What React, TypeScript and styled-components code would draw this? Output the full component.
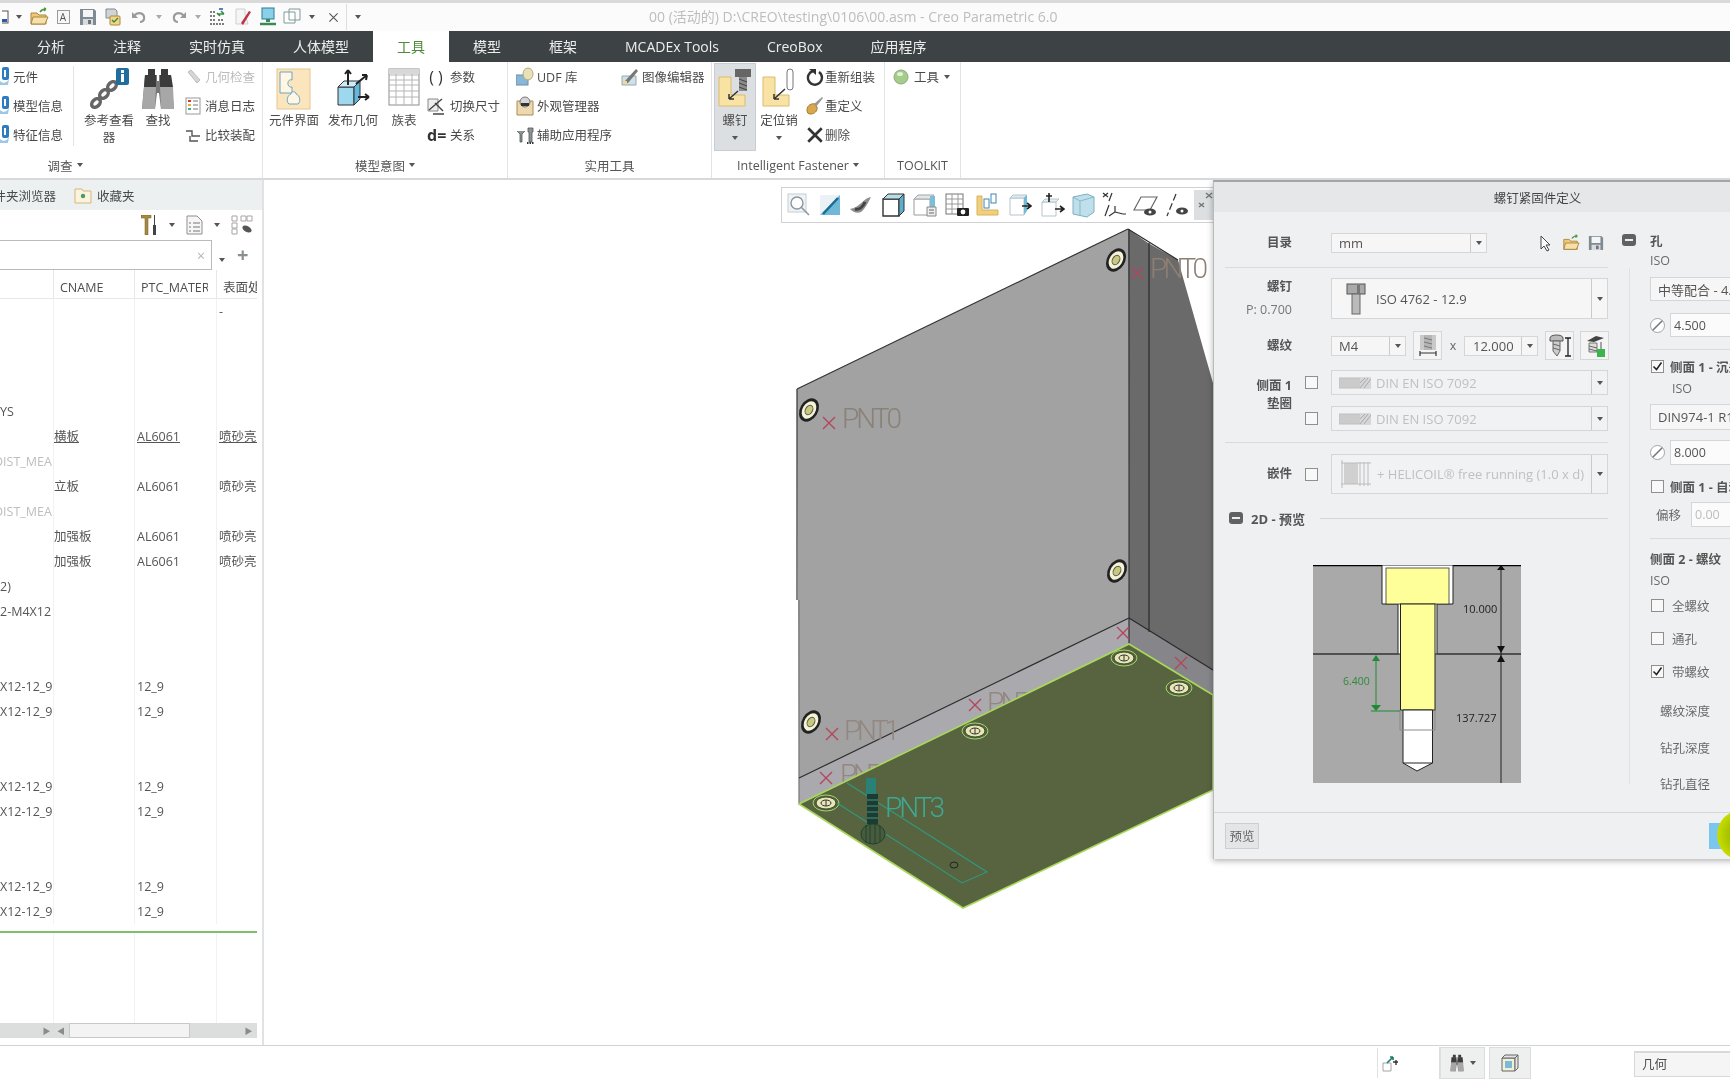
import React from "react";
import styled, { createGlobalStyle } from "styled-components";

const GlobalStyle = createGlobalStyle`
  html, body {
    margin: 0;
    padding: 0;
    background: #fff;
    overflow: hidden;
  }
  * { box-sizing: border-box; }
`;

const FONT = `"Open Sans", "Noto Sans CJK SC", sans-serif`;

const Page = styled.div`
  width: 1730px;
  height: 1080px;
  display: flex;
  flex-direction: column;
  overflow: hidden;
  background: #fff;
  color: #4a4a4a;
  font-family: ${FONT};
  font-size: 12.5px;
  filter: blur(0.35px);
`;

const Caret = styled.span<{ $c?: string }>`
  display: inline-block;
  flex: none;
  width: 0;
  height: 0;
  border-left: 3.5px solid transparent;
  border-right: 3.5px solid transparent;
  border-top: 4px solid ${(p) => p.$c || "#555"};
`;

const Svg = styled.svg`
  display: block;
  flex: none;
`;

/* ---------- title bar ---------- */
const TitleBar = styled.header`
  height: 31px;
  flex: none;
  display: flex;
  align-items: center;
  border-top: 3px solid #d9d9d9;
  background: #fbfbfb;
`;
const QaGroup = styled.div`
  display: flex;
  align-items: center;
  width: 368px;
  flex: none;
`;
const QaSlot = styled.div<{ $w: number; $line?: boolean }>`
  width: ${(p) => p.$w}px;
  height: 26px;
  display: flex;
  align-items: center;
  justify-content: center;
  flex: none;
  border-left: ${(p) => (p.$line ? "1px solid #dedede" : "none")};
`;
const LetterBox = styled.span`
  width: 13px;
  height: 14px;
  border: 1px solid #9a9a9a;
  background: #f7f7f7;
  font-size: 10px;
  line-height: 12px;
  text-align: center;
  color: #555;
`;
const WindowTitle = styled.div`
  margin-left: 281px;
  margin-top: -2px;
  font-size: 14px;
  color: #bdbdbd;
  white-space: nowrap;
`;

/* ---------- tabs ---------- */
const TabBar = styled.nav`
  height: 31px;
  flex: none;
  display: flex;
  padding-left: 13px;
  background: #3d4345;
`;
const Tab = styled.div<{ $active?: boolean }>`
  padding: 0 24px;
  font-size: 14px;
  line-height: 32px;
  white-space: nowrap;
  color: ${(p) => (p.$active ? "#4f8a3a" : "#eceeee")};
  background: ${(p) => (p.$active ? "#fff" : "transparent")};
`;

/* ---------- ribbon ---------- */
const Ribbon = styled.section`
  height: 118px;
  flex: none;
  display: flex;
  border-bottom: 2px solid #d6d8d9;
  background: #fff;
`;
const RibbonGroup = styled.div<{ $w: number }>`
  width: ${(p) => p.$w}px;
  flex: none;
  display: flex;
  flex-direction: column;
  border-right: 1px solid #e2e3e4;
`;
const GroupBody = styled.div`
  height: 90px;
  display: flex;
`;
const GroupLabel = styled.div<{ $w?: number }>`
  width: ${(p) => (p.$w ? `${p.$w}px` : "100%")};
  height: 26px;
  display: flex;
  align-items: center;
  justify-content: center;
  gap: 4px;
  font-size: 12.5px;
  white-space: nowrap;
  color: #555;
`;
const Stack = styled.div<{ $w: number; $pad?: number }>`
  width: ${(p) => p.$w}px;
  padding-left: ${(p) => p.$pad || 0}px;
  flex: none;
  display: flex;
  flex-direction: column;
`;
const SmallBtn = styled.div<{ $off?: boolean; $gap?: number }>`
  height: 29px;
  display: flex;
  align-items: center;
  gap: ${(p) => p.$gap ?? 3}px;
  white-space: nowrap;
  color: ${(p) => (p.$off ? "#bcbcbc" : "#4a4a4a")};
`;
const IconCell = styled.span<{ $w: number; $ml?: number }>`
  width: ${(p) => p.$w}px;
  margin-left: ${(p) => p.$ml || 0}px;
  flex: none;
  display: flex;
  justify-content: center;
  align-items: center;
`;
const TallBtn = styled.div<{ $w: number; $on?: boolean }>`
  width: ${(p) => p.$w}px;
  flex: none;
  margin-top: ${(p) => (p.$on ? 2 : 0)}px;
  height: ${(p) => (p.$on ? "86px" : "auto")};
  padding-top: ${(p) => (p.$on ? 3 : 5)}px;
  display: flex;
  flex-direction: column;
  align-items: center;
  line-height: 17px;
  text-align: center;
  background: ${(p) => (p.$on ? "#dcdfe2" : "transparent")};
  outline: ${(p) => (p.$on ? "1px solid #c9ccd0" : "none")};
`;
const TallIcon = styled.div`
  height: 45px;
  display: flex;
  justify-content: center;
  align-items: flex-start;
`;
const TallCaret = styled.div`
  height: 17px;
  display: flex;
  align-items: center;
`;
const VRule = styled.div`
  width: 1px;
  height: 80px;
  margin: 4px 8px 0 0;
  flex: none;
  background: #e4e4e4;
`;
const GlyphIcon = styled.span`
  width: 18px;
  margin-right: 2px;
  text-align: center;
  font-size: 16px;
  color: #333;
`;

/* ---------- main area ---------- */
const Main = styled.main`
  flex: 1;
  min-height: 0;
  display: flex;
`;
const SidePanel = styled.aside`
  width: 264px;
  flex: none;
  display: flex;
  flex-direction: column;
  border-right: 2px solid #e0e2e3;
`;
const PanelTabs = styled.div`
  height: 30px;
  flex: none;
  display: flex;
  align-items: center;
  background: #ecf0f1;
`;
const CutText = styled.div`
  width: 56px;
  display: flex;
  justify-content: flex-end;
  overflow: hidden;
  white-space: nowrap;
`;
const FavTab = styled.div`
  margin-left: 18px;
  display: flex;
  align-items: center;
  gap: 5px;
`;
const PanelTools = styled.div`
  height: 30px;
  flex: none;
  display: flex;
  align-items: center;
  padding-left: 141px;
`;
const ToolCaret = styled.span<{ $mx: number }>`
  margin: 0 ${(p) => p.$mx}px;
  display: flex;
`;
const SearchRow = styled.div`
  height: 30px;
  flex: none;
  display: flex;
  align-items: center;
`;
const SearchBox = styled.div`
  width: 212px;
  height: 30px;
  flex: none;
  display: flex;
  align-items: center;
  justify-content: flex-end;
  padding-right: 6px;
  border: 1px solid #b9bcbd;
  border-left: none;
  color: #b5b5b5;
  font-size: 14px;
`;
const SearchAction = styled.span<{ $ml: number }>`
  margin-left: ${(p) => p.$ml}px;
  color: #8a8f92;
  font-size: 20px;
  line-height: 20px;
  font-weight: 700;
`;
const TableGrid = styled.div`
  flex: 1;
  min-height: 0;
  width: 257px;
  display: flex;
  flex-direction: column;
`;
const HeadRow = styled.div`
  height: 28.5px;
  flex: none;
  display: grid;
  grid-template-columns: 54px 81px 82px 40px;
  border-bottom: 1px solid #e6e7e8;
`;
const HeadCell = styled.div`
  padding-left: 6px;
  line-height: 35px;
  overflow: hidden;
  white-space: nowrap;
  border-right: 1px solid #e6e7e8;
  color: #4e4e4e;
  &:last-child { border-right: none; }
`;
const HeadClip = styled.span`
  display: inline-block;
  width: 67px;
  overflow: hidden;
  vertical-align: top;
`;
const Row = styled.div`
  height: 25px;
  flex: none;
  display: grid;
  grid-template-columns: 54px 81px 82px 40px;
`;
const Cell = styled.div<{ $u?: boolean; $muted?: boolean; $shift?: number; $pad?: number }>`
  line-height: 25px;
  padding-left: ${(p) => p.$pad ?? 2}px;
  overflow: hidden;
  white-space: nowrap;
  border-right: 1px solid #f1f2f3;
  color: ${(p) => (p.$muted ? "#bebebe" : "#555")};
  & > span {
    display: inline-block;
    margin-left: ${(p) => p.$shift || 0}px;
    text-decoration: ${(p) => (p.$u ? "underline" : "none")};
  }
  &:last-child { border-right: none; }
`;
const DropLine = styled.div`
  height: 2px;
  margin-top: 7px;
  flex: none;
  background: #7fbf6a;
`;
const FillRow = styled.div`
  flex: 1;
  display: grid;
  grid-template-columns: 54px 81px 82px 40px;
`;
const FillCell = styled.div`
  border-right: 1px solid #f1f2f3;
  &:last-child { border-right: none; }
`;
const ScrollRow = styled.div`
  height: 15px;
  flex: none;
  width: 257px;
  margin-bottom: 7px;
  display: flex;
  background: #dcdddd;
`;
const ScrollPart = styled.div<{ $w: number; $light?: boolean }>`
  width: ${(p) => p.$w}px;
  flex: none;
  display: flex;
  align-items: center;
  justify-content: center;
  font-size: 8px;
  color: #8b8b8b;
  background: ${(p) => (p.$light ? "#f3f3f3" : "transparent")};
  border: ${(p) => (p.$light ? "1px solid #c8c8c8" : "none")};
`;

const Canvas = styled.div`
  flex: 1;
  position: relative;
  min-width: 0;
  overflow: hidden;
  background: #fff;
`;
const ModelSvg = styled.svg`
  position: absolute;
  left: 0;
  top: 0;
`;
const FloatBar = styled.div`
  position: absolute;
  left: 517px;
  top: 7px;
  width: 460px;
  height: 36px;
  display: flex;
  align-items: center;
  padding-left: 1px;
  border: 1px solid #cfd1d2;
  background: #fff;
`;
const FloatBtn = styled.div<{ $on?: boolean }>`
  width: 31.6px;
  height: 30px;
  flex: none;
  display: flex;
  align-items: center;
  justify-content: center;
  background: ${(p) => (p.$on ? "#dcdfe2" : "transparent")};
`;

/* ---------- dialog ---------- */
const Dialog = styled.div`
  position: absolute;
  left: 949px;
  top: 0;
  width: 648px;
  height: 679px;
  display: flex;
  flex-direction: column;
  background: #eff0f2;
  border-top: 2px solid #a3a5a7;
  border-left: 1px solid #b8babb;
  box-shadow: 0 2px 6px rgba(0, 0, 0, 0.3);
`;
const DialogTitle = styled.div`
  height: 30px;
  flex: none;
  background: #e5e7e8;
  text-align: center;
  font-size: 12.5px;
  line-height: 33px;
  color: #444;
`;
const DialogBody = styled.div`
  flex: 1;
  min-height: 0;
  display: flex;
`;
const LeftCol = styled.div`
  width: 415px;
  flex: none;
  padding-top: 18px;
  display: flex;
  flex-direction: column;
`;
const FormRow = styled.div<{ $mt?: number; $h: number }>`
  margin-top: ${(p) => p.$mt || 0}px;
  height: ${(p) => p.$h}px;
  flex: none;
  display: grid;
  grid-template-columns: 78px 39px 277px;
  align-items: center;
`;
const FormLabel = styled.div<{ $pb?: number }>`
  padding-bottom: ${(p) => p.$pb || 0}px;
  text-align: right;
  font-weight: 700;
  color: #555;
  line-height: 18px;
`;
const SubLabel = styled.div`
  font-weight: 400;
  color: #777;
  margin-top: 5px;
`;
const CheckCol = styled.div`
  display: flex;
  justify-content: center;
`;
const Check = styled.span`
  width: 13px;
  height: 13px;
  flex: none;
  display: flex;
  align-items: center;
  justify-content: center;
  border: 1px solid #8f8f8f;
  background: #f8f8f8;
`;
const Combo = styled.div<{ $w?: number; $off?: boolean; $h?: number }>`
  width: ${(p) => (p.$w ? `${p.$w}px` : "100%")};
  height: ${(p) => (p.$h ? `${p.$h}px` : "100%")};
  flex: none;
  display: flex;
  align-items: stretch;
  border: 1px solid #d5d6d7;
  background: ${(p) => (p.$off ? "#f1f2f3" : "#f6f6f7")};
  color: ${(p) => (p.$off ? "#c0c0c0" : "#555")};
  font-size: 13px;
  white-space: nowrap;
`;
const ComboText = styled.div<{ $gap?: number; $pad?: number }>`
  flex: 1;
  min-width: 0;
  display: flex;
  align-items: center;
  gap: ${(p) => p.$gap || 0}px;
  padding-left: ${(p) => p.$pad ?? 7}px;
  overflow: hidden;
`;
const ComboArrow = styled.div`
  width: 16px;
  flex: none;
  display: flex;
  align-items: center;
  justify-content: center;
  border-left: 1px solid #c9caca;
`;
const SquareBtn = styled.div<{ $ml: number }>`
  width: 29px;
  height: 29px;
  margin-left: ${(p) => p.$ml}px;
  flex: none;
  display: flex;
  align-items: center;
  justify-content: center;
  border: 1px solid #d5d6d7;
  background: #f4f4f5;
`;
const TimesText = styled.span`
  width: 22px;
  flex: none;
  text-align: center;
  color: #666;
`;
const FieldIcons = styled.div`
  grid-column: 3;
  display: flex;
  align-items: center;
`;
const Rule = styled.div<{ $mt: number }>`
  height: 1px;
  margin: ${(p) => p.$mt}px 21px 0 11px;
  flex: none;
  background: #d9dadb;
`;
const Section = styled.div`
  margin: 16px 0 0 15px;
  height: 16px;
  flex: none;
  display: flex;
  align-items: center;
  font-size: 13px;
  font-weight: 700;
  color: #555;
`;
const Collapse = styled.span`
  width: 14px;
  height: 12px;
  flex: none;
  display: flex;
  align-items: center;
  justify-content: center;
  border-radius: 3px;
  background: #5e6265;
  &::before {
    content: "";
    width: 8px;
    height: 2px;
    background: #eee;
  }
`;
const SectionText = styled.span`
  margin-left: 8px;
  white-space: nowrap;
`;
const SectionLine = styled.span`
  flex: 1;
  height: 1px;
  margin: 0 21px 0 15px;
  background: #d4d5d6;
`;
const PreviewSvg = styled.svg`
  display: block;
  flex: none;
  margin: 39px 0 0 99px;
`;
const RightCol = styled.div`
  flex: 1;
  min-width: 0;
  padding-top: 18px;
  display: flex;
  flex-direction: column;
`;
const HoleHead = styled.div`
  height: 20px;
  flex: none;
  display: flex;
  align-items: center;
  margin-left: -7px;
  font-weight: 700;
  color: #555;
`;
const HoleTitle = styled.span`
  margin-left: 14px;
`;
const IsoLine = styled.div<{ $ml?: number; $mt?: number }>`
  height: 14px;
  margin: ${(p) => p.$mt ?? 4}px 0 0 ${(p) => p.$ml ?? 0}px;
  flex: none;
  line-height: 14px;
  color: #6a6a6a;
`;
const RightBody = styled.div`
  height: 516px;
  flex: none;
  padding-left: 20px;
  border-left: 1px solid #dfe0e1;
  display: flex;
  flex-direction: column;
`;
const Flow = styled.div<{ $mt: number; $h: number; $gap?: number; $ml?: number }>`
  margin-top: ${(p) => p.$mt}px;
  margin-left: ${(p) => p.$ml || 0}px;
  height: ${(p) => p.$h}px;
  flex: none;
  display: flex;
  align-items: center;
  gap: ${(p) => p.$gap || 0}px;
  white-space: nowrap;
`;
const SideRule = styled.div<{ $mt: number }>`
  height: 1px;
  margin-top: ${(p) => p.$mt}px;
  flex: none;
  background: #d9dadb;
`;
const BoldText = styled.span<{ $ml?: number }>`
  margin-left: ${(p) => p.$ml || 0}px;
  font-weight: 700;
  color: #555;
`;
const PlainText = styled.span<{ $c?: string }>`
  color: ${(p) => p.$c || "#6a6a6a"};
`;
const DiaIcon = styled.span`
  width: 15px;
  height: 15px;
  margin-right: 5px;
  flex: none;
  border-radius: 50%;
  border: 1px solid #a5a5a5;
  background: linear-gradient(135deg, #fff 45%, #777 47%, #777 53%, #fff 55%);
`;
const InputBox = styled.div<{ $off?: boolean }>`
  width: 120px;
  height: 100%;
  padding-left: 3px;
  display: flex;
  align-items: center;
  border: 1px solid #d5d6d7;
  background: #fbfbfb;
  color: ${(p) => (p.$off ? "#bdbdbd" : "#555")};
`;
const Footer = styled.div`
  height: 47px;
  flex: none;
  display: flex;
  align-items: center;
  padding-left: 11px;
  border-top: 1px solid #d5d6d7;
`;
const FootBtn = styled.div`
  width: 34px;
  height: 26px;
  flex: none;
  text-align: center;
  line-height: 25px;
  background: #e4e5e6;
  border: 1px solid #cdcecf;
  color: #666;
`;
const OkBtn = styled.div`
  width: 70px;
  height: 26px;
  margin-left: 450px;
  flex: none;
  background: #7bc6ef;
`;
const ClickMark = styled.div`
  position: absolute;
  left: 503px;
  top: 628px;
  width: 50px;
  height: 50px;
  border-radius: 50%;
  background: radial-gradient(circle, #a8c400 40%, #c8dc00 70%);
`;

/* ---------- status bar ---------- */
const StatusBar = styled.footer`
  height: 35px;
  flex: none;
  display: flex;
  align-items: center;
  padding-left: 1377px;
  border-top: 1px solid #d2d3d4;
`;
const StatusCell = styled.div<{ $w: number; $box?: boolean; $ml?: number; $line?: boolean; $start?: boolean }>`
  width: ${(p) => p.$w}px;
  height: 30px;
  margin-left: ${(p) => p.$ml || 0}px;
  padding-left: ${(p) => (p.$start ? 3 : 0)}px;
  flex: none;
  display: flex;
  align-items: center;
  justify-content: ${(p) => (p.$start ? "flex-start" : "center")};
  gap: 6px;
  border-left: ${(p) => (p.$line ? "1px solid #e0e0e0" : "none")};
  background: ${(p) => (p.$box ? "#eeefef" : "transparent")};
  outline: ${(p) => (p.$box ? "1px solid #dcdcdc" : "none")};
`;
const GeomBox = styled.div`
  width: 120px;
  height: 26px;
  margin: 2px 0 0 104px;
  flex: none;
  padding-left: 7px;
  line-height: 24px;
  border: 1px solid #d8d8d8;
  border-top-width: 2px;
  background: #f5f5f5;
`;

/* ---------- icons ---------- */
const FolderIcon = ({ s = 20 }: { s?: number }) => (
  <Svg width={s} height={s} viewBox="0 0 20 20">
    <path d="M2 6h6l2 2h7v9H2z" fill="#f0c878" stroke="#a98640" />
    <path d="M4 10h15l-3 7H2z" fill="#f7dfa8" stroke="#a98640" />
    <path d="M11 5c2-3 4-3 6-3m0 0l-2-1m2 1l-2 2" stroke="#4d9a3a" strokeWidth="1.5" fill="none" />
  </Svg>
);
const SaveIcon = ({ s = 18 }: { s?: number }) => (
  <Svg width={s} height={s} viewBox="0 0 18 18">
    <path d="M1 1h14l2 2v14H1z" fill="#7f8a92" />
    <rect x="4" y="2" width="10" height="7" fill="#f3f5f6" />
    <rect x="4" y="11" width="10" height="6" fill="#d9dcdf" />
    <rect x="9" y="12" width="3" height="4" fill="#6c757c" />
  </Svg>
);
const UserInfoIcon = () => (
  <Svg width={10} height={22} viewBox="0 0 10 22">
    <rect x="2" y="1" width="7" height="13" rx="2" fill="#2c7cbf" />
    <path d="M0 15c3 3 7 2 9-2l-1 6H0z" fill="#9cc7e6" />
    <rect x="4" y="4" width="2" height="7" fill="#fff" />
  </Svg>
);
const Binoculars = ({ s = 34 }: { s?: number }) => (
  <Svg width={s} height={s * 1.3} viewBox="0 0 34 44">
    <path d="M7 2h7v6H7zM20 2h7v6h-7z" fill="#3b3b3b" />
    <path d="M4 8h12v6h2V8h12l3 34H20l-2-16h-2l-2 16H1z" fill="#777" />
    <path d="M3 20h12l-1 22H1zM19 20h13l1 22H20z" fill="#a7a7a7" />
    <path d="M4 8h11v12H3zM19 8h11l2 12H19z" fill="#3c3c3c" />
  </Svg>
);
const ChainIcon = () => (
  <Svg width={42} height={44} viewBox="0 0 42 44">
    <g fill="none" stroke="#666" strokeWidth="3.5">
      <ellipse cx="8" cy="36" rx="5" ry="3.5" transform="rotate(-45 8 36)" />
      <ellipse cx="16" cy="27" rx="5" ry="3.5" transform="rotate(-45 16 27)" />
      <ellipse cx="24" cy="19" rx="5" ry="3.5" transform="rotate(-45 24 19)" />
    </g>
    <rect x="28" y="1" width="13" height="17" rx="2" fill="#1f6e9e" />
    <rect x="33" y="3" width="3" height="3" fill="#fff" />
    <rect x="33" y="7" width="3" height="8" fill="#fff" />
  </Svg>
);
const PuzzleIcon = () => (
  <Svg width={36} height={44} viewBox="0 0 36 44">
    <rect x="1" y="2" width="33" height="40" fill="#fbe5bd" stroke="#e6c58f" />
    <path d="M4 5h12v8c-5-2-6 8 0 7v6H4z" fill="#fff7e4" stroke="#6ba6c7" />
    <path d="M13 37c-3-2-2-9 2-10 0-3 5-3 5 0 4 1 5 8 2 10z" fill="#fff7e4" stroke="#6ba6c7" />
  </Svg>
);
const PublishIcon = () => (
  <Svg width={34} height={44} viewBox="0 0 34 44">
    <path d="M2 20h16v18H2z" fill="#9ed8ef" stroke="#333" />
    <path d="M2 20l6-6h16l-6 6z" fill="#cbecf8" stroke="#333" />
    <path d="M18 20l6-6v18l-6 6z" fill="#63b7dc" stroke="#333" />
    <path d="M12 18V3m0 0l-3 4m3-4l3 4M20 17L31 8m0 0l-5 0m5 0l-1 5M22 30h11m0 0l-4-3m4 3l-4 3" stroke="#222" strokeWidth="2" fill="none" />
  </Svg>
);
const FamilyTableIcon = () => (
  <Svg width={32} height={40} viewBox="0 0 32 40">
    <rect x="1" y="2" width="30" height="36" fill="#fff" stroke="#8d8d8d" />
    <path d="M1 8h30M1 13h30M1 18h30M1 24h30M1 30h30M8 2v36M16 2v36M24 2v36" stroke="#b5b5b5" />
    <rect x="1" y="2" width="30" height="5" fill="#d8d8d8" />
  </Svg>
);
const LBracket = () => <path d="M2 10h12v18h14v11H2z" fill="#f9e3a4" stroke="#d9bb6f" />;
const BoltTallIcon = () => (
  <Svg width={36} height={44} viewBox="0 0 36 44">
    <LBracket />
    <rect x="18" y="2" width="16" height="8" fill="#666" />
    <rect x="22" y="10" width="8" height="14" fill="#8a8a8a" />
    <path d="M22 12l8 3M22 16l8 3M22 20l8 3" stroke="#444" />
    <path d="M21 24l-9 8m0 0v-5m0 5h5" stroke="#333" strokeWidth="1.5" fill="none" />
  </Svg>
);
const PinTallIcon = () => (
  <Svg width={36} height={44} viewBox="0 0 36 44">
    <LBracket />
    <rect x="26" y="2" width="6" height="21" rx="3" fill="#fff" stroke="#777" />
    <path d="M24 22l-11 10m0 0v-5m0 5h5" stroke="#333" strokeWidth="1.5" fill="none" />
  </Svg>
);
const GeomCheckIcon = () => (
  <Svg width={16} height={16} viewBox="0 0 16 16">
    <path d="M3 3l3-2 9 10-3 3z" fill="#d6d6d6" stroke="#bbb" />
  </Svg>
);
const MsgLogIcon = () => (
  <Svg width={16} height={18} viewBox="0 0 16 18">
    <rect x="1" y="1" width="14" height="16" fill="#fff" stroke="#999" />
    <path d="M3 4h3" stroke="#d33" strokeWidth="2" />
    <path d="M3 8h3" stroke="#e6b422" strokeWidth="2" />
    <path d="M3 12h3" stroke="#4a9" strokeWidth="2" />
    <path d="M8 4h5M8 8h5M8 12h5" stroke="#777" />
  </Svg>
);
const CompareIcon = () => (
  <Svg width={16} height={14} viewBox="0 0 16 14">
    <path d="M1 3h6v5h8M5 8v5h8" stroke="#555" fill="none" strokeWidth="1.4" />
  </Svg>
);
const ToggleDimIcon = () => (
  <Svg width={18} height={18} viewBox="0 0 18 18">
    <path d="M1 2h10v12H1z" fill="#eee" stroke="#888" />
    <path d="M2 13L15 2M6 17h11M8 6l8 8" stroke="#444" strokeWidth="1.4" />
  </Svg>
);
const UdfIcon = () => (
  <Svg width={18} height={20} viewBox="0 0 18 20">
    <rect x="0" y="8" width="12" height="10" fill="#89b7d8" stroke="#6e8da6" />
    <ellipse cx="12" cy="7" rx="5" ry="6" fill="#e8e1b8" stroke="#b7a878" />
  </Svg>
);
const AppearIcon = () => (
  <Svg width={18} height={20} viewBox="0 0 18 20">
    <path d="M1 5h16v14H1z" fill="#eed9ae" stroke="#a98c5c" />
    <circle cx="9" cy="6" r="5" fill="#d6d6d6" stroke="#777" />
    <path d="M5 7h8v3H5z" fill="#333" />
  </Svg>
);
const AuxIcon = () => (
  <Svg width={18} height={20} viewBox="0 0 18 20">
    <path d="M1 6l3 3v8h2V9l3-3M12 3h5v4h-1v10h-3V7h-1z" fill="#8a9396" stroke="#555" strokeWidth=".8" />
    <path d="M11 18h7" stroke="#333" strokeDasharray="1.5 1" strokeWidth="2" />
  </Svg>
);
const ImageEditIcon = () => (
  <Svg width={18} height={18} viewBox="0 0 18 18">
    <path d="M1 8h14v9H1z" fill="#cfe0e8" stroke="#9aa" />
    <path d="M4 13L15 1l2 2L7 15H4z" fill="#777" />
    <path d="M2 13h4v3H2z" fill="#f4d796" />
  </Svg>
);
const ReassembleIcon = () => (
  <Svg width={18} height={18} viewBox="0 0 18 18">
    <path d="M7 3a7 7 0 1 0 6 1" fill="none" stroke="#333" strokeWidth="2.4" />
    <path d="M3 1h7v6z" fill="#333" />
  </Svg>
);
const RedefineIcon = () => (
  <Svg width={18} height={20} viewBox="0 0 18 20">
    <path d="M1 14c0-5 5-7 8-6l2 3c1 4-3 7-6 7s-4-1-4-4z" fill="#d9a84c" stroke="#a67b2b" />
    <path d="M8 8l8-7 1 1-7 9z" fill="#999" />
  </Svg>
);
const CloseX = ({ s = 16, c = "#333", w = 2.4 }: { s?: number; c?: string; w?: number }) => (
  <Svg width={s} height={s} viewBox="0 0 16 16">
    <path d="M2 2l12 12M14 2L2 14" stroke={c} strokeWidth={w} />
  </Svg>
);
const GreenBall = () => (
  <Svg width={16} height={16} viewBox="0 0 16 16">
    <circle cx="8" cy="8" r="7" fill="#a4cd8a" stroke="#8ea886" />
    <ellipse cx="7" cy="5" rx="3" ry="2" fill="#e2f2d4" />
  </Svg>
);
const ScrewHeadIcon = () => (
  <Svg width={20} height={32} viewBox="0 0 20 32">
    <rect x="1" y="1" width="18" height="10" fill="#aaa" stroke="#555" />
    <rect x="6" y="11" width="8" height="20" fill="#bbb" stroke="#666" />
    <rect x="11" y="2" width="3" height="8" fill="#777" />
  </Svg>
);
const Washer = () => (
  <Svg width={32} height={12} viewBox="0 0 32 12">
    <rect x="0" y="1" width="32" height="10" fill="#cbcbcb" stroke="#c0c0c0" />
    <rect x="21" y="1" width="11" height="10" fill="#d6d6d6" />
    <path d="M21 11l8-10M25 11l7-9M21 6l5-5" stroke="#aaa" />
  </Svg>
);
const CoilIcon = () => (
  <Svg width={34} height={28} viewBox="0 0 34 28">
    <rect x="5" y="3" width="14" height="21" fill="#d0d0d0" />
    <path d="M3 0v28M21 2v24M25 2v24M29 2v24M2 3h30M2 24h30" stroke="#bcbcbc" fill="none" />
  </Svg>
);
const SquareDrill = () => (
  <Svg width={22} height={24} viewBox="0 0 22 24">
    <rect x="3" y="1" width="16" height="15" fill="#c9c9c9" />
    <rect x="7" y="1" width="8" height="15" fill="#b5b5b5" />
    <path d="M7 4l8 2M7 8l8 2M7 12l8 2" stroke="#777" />
    <path d="M3 19h16M3 17v5M19 17v5" stroke="#333" strokeWidth="1.2" />
  </Svg>
);
const LengthScrew = () => (
  <Svg width={24} height={24} viewBox="0 0 24 24">
    <path d="M2 4c0-4 13-4 13 0v3H2z" fill="#bbb" stroke="#555" />
    <path d="M5 7h7v10l-3 5-4-5z" fill="#ccc" stroke="#666" />
    <path d="M5 10l7 2M5 14l7 2" stroke="#666" />
    <path d="M20 4v18M17 4h6M17 22h6" stroke="#222" strokeWidth="1.3" />
  </Svg>
);
const HolePlusIcon = () => (
  <Svg width={24} height={24} viewBox="0 0 24 24">
    <path d="M4 7l9-5 8 2-10 4z" fill="#444" />
    <path d="M6 9h8v9H6z" fill="#ddd" stroke="#777" />
    <path d="M6 12l8 2M6 15l8 2" stroke="#666" />
    <path d="M18 8v8" stroke="#555" />
    <rect x="14" y="15" width="8" height="8" fill="#39b54a" />
  </Svg>
);
const CursorIcon = () => (
  <Svg width={13} height={17} viewBox="0 0 13 17">
    <path d="M2 1v13l3-3 3 5 2-1-3-5h4z" fill="#fff" stroke="#444" />
  </Svg>
);
const TickMark = () => (
  <Svg width={11} height={11} viewBox="0 0 11 11">
    <path d="M1.5 5.5l3 3 5-7" stroke="#222" strokeWidth="1.5" fill="none" />
  </Svg>
);
const FavIcon = () => (
  <Svg width={18} height={18} viewBox="0 0 18 18">
    <path d="M1 3h7l1 2h8v12H1z" fill="#fbf3dd" stroke="#d5b777" />
    <circle cx="9" cy="10" r="2.2" fill="#4a9a6a" />
  </Svg>
);
const ToolsIcon = () => (
  <Svg width={17} height={20} viewBox="0 0 17 20">
    <path d="M0 0h10v3H7v17H4V3H0z" fill="#a88a3e" stroke="#6e5a25" strokeWidth=".5" />
    <path d="M13 0v10h-1v10h3V10h-1V0z" fill="#444" />
  </Svg>
);
const ListDocIcon = () => (
  <Svg width={17} height={20} viewBox="0 0 17 20">
    <path d="M1 1h10l5 5v13H1z" fill="#f6f6f6" stroke="#8f8f8f" />
    <path d="M3 8h2M3 12h2M3 16h2M7 8h7M7 12h7M7 16h7" stroke="#777" />
  </Svg>
);
const TreeEyeIcon = () => (
  <Svg width={22} height={20} viewBox="0 0 22 20">
    <path d="M1 1h5v5H1zM1 8h5v5H1zM1 14h5v5H1zM10 1h5v5h-5zM16 1h5v5h-5z" fill="#fff" stroke="#a5a5a5" />
    <ellipse cx="16" cy="14" rx="5" ry="3" fill="#555" transform="rotate(30 16 14)" />
  </Svg>
);

const Qa = {
  box: (
    <Svg width={7} height={14} viewBox="0 0 7 14">
      <rect x="-4" y="1" width="10" height="12" fill="#fff" stroke="#555" />
      <rect x="0" y="9" width="5" height="3" fill="#3056b0" />
    </Svg>
  ),
  saveAs: (
    <Svg width={18} height={18} viewBox="0 0 18 18">
      <path d="M2 1h9l2 2v7H2z" fill="#cfd4d8" stroke="#888" />
      <rect x="6" y="8" width="10" height="9" rx="1" fill="#f2d58a" stroke="#a98a40" />
      <path d="M8 12l2 2 4-4" stroke="#3a8a3a" fill="none" strokeWidth="1.4" />
    </Svg>
  ),
  undo: (
    <Svg width={16} height={14} viewBox="0 0 16 14">
      <path d="M3 6c4-5 11-3 10 3-.5 2-2 3-4 3" fill="none" stroke="#9a9a9a" strokeWidth="2.2" />
      <path d="M1 2v6h6z" fill="#9a9a9a" />
    </Svg>
  ),
  redo: (
    <Svg width={16} height={14} viewBox="0 0 16 14">
      <path d="M13 6C9 1 2 3 3 9c.5 2 2 3 4 3" fill="none" stroke="#9a9a9a" strokeWidth="2.2" />
      <path d="M15 2v6H9z" fill="#9a9a9a" />
    </Svg>
  ),
  regen: (
    <Svg width={16} height={18} viewBox="0 0 16 18">
      <path d="M1 4h5M1 8h5M1 12h5M1 16h14M9 12h6" stroke="#555" strokeDasharray="2 1" strokeWidth="1.6" />
      <path d="M8 6h7m0 0l-3-3m-1 5L8 5" stroke="#2f8f4a" strokeWidth="1.6" fill="none" />
      <path d="M10 1h4" stroke="#2b62b5" strokeWidth="1.6" />
    </Svg>
  ),
  brush: (
    <Svg width={18} height={18} viewBox="0 0 18 18">
      <path d="M2 1h9v5l3 10H2z" fill="#f5f5f5" stroke="#cfcfcf" />
      <path d="M7 15L15 3l2 1-8 13z" fill="#b34" />
    </Svg>
  ),
  monitor: (
    <Svg width={18} height={20} viewBox="0 0 18 20">
      <rect x="3" y="1" width="12" height="11" fill="#8ad0e8" stroke="#2a7d9a" />
      <rect x="7" y="12" width="4" height="3" fill="#3a8a55" />
      <path d="M1 17h16" stroke="#3a8a55" strokeWidth="2.5" />
    </Svg>
  ),
  windows: (
    <Svg width={18} height={18} viewBox="0 0 18 18">
      <path d="M1 4h11v11H1z" fill="#fff" stroke="#7f9a9a" />
      <path d="M6 1h11v11H6z" fill="none" stroke="#7f9a9a" />
    </Svg>
  ),
};

const FloatIcons = [
  <Svg key="a" width={24} height={24} viewBox="0 0 24 24">
    <rect x="1" y="1" width="18" height="18" fill="#eef3f6" stroke="#c8ced2" />
    <circle cx="10" cy="10" r="6" fill="#fff" stroke="#8c979e" strokeWidth="1.4" />
    <path d="M14 14l8 8" stroke="#8c979e" strokeWidth="1.6" />
  </Svg>,
  <Svg key="b" width={24} height={24} viewBox="0 0 24 24">
    <rect x="2" y="2" width="20" height="20" fill="#6fb9d6" />
    <path d="M2 2h20L2 22z" fill="#eaf2f5" />
    <path d="M5 21L20 5" stroke="#1c6d93" strokeWidth="2.5" />
  </Svg>,
  <Svg key="c" width={26} height={24} viewBox="0 0 26 24">
    <path d="M1 16c4 4 10 6 14 0 3-4 5-8 7-12-8 1-10 10-21 12z" fill="#8f8f8f" />
    <path d="M6 16c4 1 8-2 10-7" stroke="#444" strokeWidth="3" fill="none" />
  </Svg>,
  <Svg key="d" width={24} height={24} viewBox="0 0 24 24">
    <path d="M1 6h16v17H1z" fill="#fff" stroke="#333" strokeWidth="1.4" />
    <path d="M1 6l5-5h16l-5 5z" fill="#b7dde9" stroke="#333" />
    <path d="M17 6l5-5v17l-5 5z" fill="#5daecb" stroke="#333" />
  </Svg>,
  <Svg key="e" width={24} height={24} viewBox="0 0 24 24">
    <path d="M1 6h16v16H1z" fill="#fff" stroke="#9a9a9a" />
    <path d="M1 6l4-4h16l-4 4z" fill="#dfe8ec" stroke="#a5a5a5" />
    <path d="M17 3h5v12h-5z" fill="#7bbfd6" />
    <path d="M14 14h9v9h-9z" fill="#eee" stroke="#888" />
    <path d="M16 17h5M16 20h5" stroke="#666" />
  </Svg>,
  <Svg key="f" width={24} height={24} viewBox="0 0 24 24">
    <rect x="1" y="1" width="17" height="20" fill="#fff" stroke="#777" />
    <path d="M1 6h17M1 11h17M1 16h17M7 1v20M13 1v20" stroke="#999" />
    <rect x="12" y="15" width="12" height="8" rx="1" fill="#222" />
    <circle cx="18" cy="19" r="2.4" fill="#fff" />
  </Svg>,
  <Svg key="g" width={24} height={24} viewBox="0 0 24 24">
    <path d="M1 3h5v14h16v5H1z" fill="#f2cf7d" stroke="#d8b25b" />
    <rect x="8" y="6" width="5" height="9" fill="#fff" stroke="#3f88b4" />
    <rect x="15" y="1" width="5" height="9" fill="#fff" stroke="#3f88b4" />
  </Svg>,
  <Svg key="h" width={24} height={24} viewBox="0 0 24 24">
    <path d="M2 5h14v17H2z" fill="#fff" stroke="#b5c5cc" />
    <path d="M2 5l3-3h14l-3 3z" fill="#dcecf2" stroke="#b5c5cc" />
    <path d="M16 5l3-3v16l-3 4z" fill="#70bcd8" />
    <path d="M14 13h9M19 10l4 3-4 3" stroke="#222" strokeWidth="1.6" fill="none" />
  </Svg>,
  <Svg key="i" width={26} height={26} viewBox="0 0 26 26">
    <path d="M3 10h14v14H3z" fill="#fff" stroke="#b5c5cc" />
    <path d="M3 10l3-3h14l-3 3z" fill="#e6f0f4" stroke="#b5c5cc" />
    <path d="M10 1v9M7 4h6M16 17h9M21 14l4 3-4 3" stroke="#222" strokeWidth="1.6" fill="none" />
  </Svg>,
  <Svg key="j" width={24} height={26} viewBox="0 0 24 26">
    <path d="M2 5l14-3 7 3v15l-7 5-14-3z" fill="#bfe0ea" stroke="#7eb0c2" />
    <path d="M2 5l7 4 14-4M9 9v15" stroke="#86b9cb" fill="none" />
  </Svg>,
  <Svg key="k" width={26} height={26} viewBox="0 0 26 26">
    <path d="M1 1l5 4M6 1L1 5M10 1L7 9M7 13l-4 11M13 14v6l-6 4M13 20l8 2M21 22h3" stroke="#333" strokeWidth="1.2" fill="none" />
  </Svg>,
  <Svg key="l" width={26} height={24} viewBox="0 0 26 24">
    <path d="M1 17L8 4h16l-7 13z" fill="#fff" stroke="#666" strokeWidth="1.2" />
    <ellipse cx="17" cy="19" rx="6" ry="3.6" fill="#444" />
    <circle cx="17" cy="19" r="1.5" fill="#fff" />
  </Svg>,
  <Svg key="m" width={24} height={24} viewBox="0 0 24 24">
    <path d="M10 1L1 23" stroke="#333" strokeWidth="1.2" strokeDasharray="7 3" />
    <ellipse cx="16" cy="18" rx="6" ry="3.6" fill="#444" />
    <circle cx="16" cy="18" r="1.5" fill="#fff" />
  </Svg>,
  <Svg key="n" width={24} height={26} viewBox="0 0 24 26">
    <path d="M8 1l6 5M14 1L8 6M1 11l5 4M6 11l-5 4" stroke="#777" strokeWidth="1.5" />
  </Svg>,
];

/* ---------- table data ---------- */
type Item = {
  name?: string;
  muted?: boolean;
  shift?: number;
  cname?: string;
  mat?: string;
  surf?: string;
  under?: boolean;
};
const screw: Item = { name: "X12-12_9", mat: "12_9" };
const ROWS: Item[] = [
  { surf: "-" },
  {},
  {},
  {},
  { name: "YS" },
  { cname: "横板", mat: "AL6061", surf: "喷砂亮光", under: true },
  { name: "DIST_MEA", muted: true, shift: -6 },
  { cname: "立板", mat: "AL6061", surf: "喷砂亮光" },
  { name: "DIST_MEA", muted: true, shift: -6 },
  { cname: "加强板", mat: "AL6061", surf: "喷砂亮光" },
  { cname: "加强板", mat: "AL6061", surf: "喷砂亮光" },
  { name: "2)" },
  { name: "2-M4X12" },
  {},
  {},
  screw,
  screw,
  {},
  {},
  screw,
  screw,
  {},
  {},
  screw,
  screw,
];

const QA_WIDTHS = [11, 16, 24, 24, 25, 26, 25, 15, 25, 13, 26, 26, 24, 24, 16, 26];

/* ---------- 3D model ---------- */
const Cross = ({ x, y, c = "#b2465c" }: { x: number; y: number; c?: string }) => (
  <path d={`M${x - 6} ${y - 6}l12 12M${x + 6} ${y - 6}l-12 12`} stroke={c} strokeWidth="1.4" />
);
const WallBolt = ({ x, y }: { x: number; y: number }) => (
  <g transform={`rotate(30 ${x} ${y})`}>
    <ellipse cx={x} cy={y} rx="9" ry="12.5" fill="#222" />
    <ellipse cx={x} cy={y} rx="6.5" ry="9.5" fill="#f4f3d6" />
    <ellipse cx={x} cy={y} rx="3.5" ry="5" fill="#c9c97c" stroke="#555" />
  </g>
);
const FloorBolt = ({ x, y }: { x: number; y: number }) => (
  <g>
    <ellipse cx={x} cy={y} rx="13" ry="8" fill="none" stroke="#9ed76b" />
    <ellipse cx={x} cy={y} rx="10" ry="6" fill="#e8e6b8" stroke="#3c4a2a" />
    <ellipse cx={x} cy={y} rx="5" ry="3" fill="none" stroke="#333" />
    <path d={`M${x} ${y - 3}v6`} stroke="#333" />
  </g>
);
const PntLabel = ({ x, y, w, c, text }: { x: number; y: number; w: number; c: string; text: string }) => (
  <text
    x={x}
    y={y}
    fontFamily="Roboto, Liberation Sans, sans-serif"
    fontWeight="300"
    fontSize="28"
    fill={c}
    textLength={w}
    lengthAdjust="spacing"
  >
    {text}
  </text>
);

const Model = () => (
  <ModelSvg width={1466} height={865} viewBox="264 180 1466 865">
    {/* right wall */}
    <path d="M1128 229L1148 243L1178 260L1213 383V695L1129 644Z" fill="#6a6a6b" />
    <path d="M1129 618L1213 670V695L1129 644Z" fill="#85858a" />
    <path d="M1149 243V632M1129 618L1213 670M1128 229L1178 260" stroke="#2b2b2b" strokeWidth="1.2" fill="none" />
    <PntLabel x={1150} y={278} w={58} c="#8d7f72" text="PNT0" />
    {/* left wall */}
    <path d="M797 389L1128 229L1129 644L799 804Z" fill="#a2a2a2" />
    <path d="M799 778L1129 618V644L799 804Z" fill="#aaaaae" />
    <path d="M797 389L1128 229M1129 229V644M797 389V600" stroke="#333" strokeWidth="1.2" fill="none" />
    <path d="M799 600V804" stroke="#777" strokeWidth="1.2" />
    <path d="M799 778L1129 618" stroke="#2e2e2e" strokeWidth="1.2" />
    <Cross x={829} y={423} />
    <Cross x={1137} y={273} />
    <Cross x={832} y={734} />
    <Cross x={975} y={705} />
    <Cross x={826} y={778} />
    <Cross x={1123} y={633} />
    <Cross x={1181} y={663} />
    <PntLabel x={842} y={428} w={60} c="#8a8178" text="PNT0" />
    <PntLabel x={844} y={740} w={56} c="#93877f" text="PNT1" />
    <PntLabel x={987} y={712} w={58} c="#93877f" text="PNT2" />
    <PntLabel x={840} y={784} w={56} c="#93877f" text="PNT2" />
    <WallBolt x={1116} y={260} />
    <WallBolt x={809} y={410} />
    <WallBolt x={811} y={722} />
    <WallBolt x={1117} y={571} />
    {/* floor */}
    <path
      d="M799 804L1129 644L1213 695V790L963 908Z"
      fill="#58633f"
      stroke="#a9d85a"
      strokeWidth="1.6"
    />
    <FloorBolt x={1124} y={658} />
    <FloorBolt x={1179} y={688} />
    <FloorBolt x={975} y={731} />
    <FloorBolt x={826} y={803} />
    {/* placed screw preview */}
    <path d="M847 783L987 872L962 883L837 803" fill="none" stroke="#2f9a82" strokeWidth="1.1" />
    <ellipse cx="954" cy="865" rx="4" ry="3" fill="none" stroke="#222" />
    <rect x="866" y="778" width="10" height="16" fill="#1f8a86" opacity="0.8" />
    <rect x="867" y="794" width="11" height="30" fill="#1d3a33" />
    <path d="M867 800h11M867 806h11M867 812h11M867 818h11" stroke="#3f9a7c" />
    <ellipse cx="873" cy="834" rx="12" ry="10" fill="#4a5a3c" stroke="#19462f" />
    <path d="M866 825v18M870 825v19M875 825v19M880 826v16" stroke="#19462f" />
    <PntLabel x={885} y={817} w={60} c="#3fa893" text="PNT3" />
  </ModelSvg>
);

const PreviewDrawing = () => (
  <PreviewSvg width={208} height={218} viewBox="1313 565 208 218">
    <rect x="1313" y="565" width="208" height="218" fill="#a9a9a9" />
    <path d="M1313 565.5H1521" stroke="#000" strokeWidth="1.5" />
    <path d="M1382 565H1453V604H1437V654H1398V604H1382Z" fill="#fff" stroke="#222" strokeWidth="1" />
    <rect x="1386" y="568" width="63" height="36" fill="#ffff99" stroke="#333" strokeWidth=".8" />
    <rect x="1400.5" y="604" width="34.5" height="106" fill="#ffff99" stroke="#222" strokeWidth="1" />
    <path d="M1313 654H1398M1437 654H1521" stroke="#333" strokeWidth="1.4" />
    <path d="M1403 710H1432.5V763L1417 771L1403 763Z" fill="#fff" stroke="#222" />
    <path d="M1400 730H1435M1400 710V730M1435 710V730" stroke="#8a8a8a" fill="none" />
    <path d="M1403 763H1432.5" stroke="#222" />
    <path d="M1501 566V783" stroke="#222" />
    <path d="M1497 570h8l-4-5zM1497 646h8l-4 7zM1497 662h8l-4-7z" fill="#111" />
    <text x="1463" y="613" fontFamily="Open Sans, sans-serif" fontSize="11" fill="#222">10.000</text>
    <text x="1456" y="722" fontFamily="Open Sans, sans-serif" fontSize="11" fill="#222">137.727</text>
    <text x="1343" y="685" fontFamily="Open Sans, sans-serif" fontSize="10.5" fill="#2e8b3c">6.400</text>
    <path d="M1376 656V709M1371 711H1400" stroke="#1f8a35" />
    <path d="M1372 661h8l-4-6zM1371 705h10l-5 6z" fill="#1f8a35" />
  </PreviewSvg>
);

const ComboArrowCell = () => (
  <ComboArrow>
    <Caret />
  </ComboArrow>
);

const CheckStack = styled.div`
  height: 100%;
  display: flex;
  flex-direction: column;
  align-items: center;
  justify-content: space-between;
  padding: 6px 0;
`;
const WasherStack = styled.div`
  height: 100%;
  display: flex;
  flex-direction: column;
  justify-content: space-between;
`;
const WasherSlot = styled.div`
  height: 25px;
`;

const WasherCombo = () => (
  <WasherSlot>
    <Combo $off>
      <ComboText $gap={5}>
        <Washer />
        DIN EN ISO 7092
      </ComboText>
      <ComboArrowCell />
    </Combo>
  </WasherSlot>
);

export default function App() {
  return (
    <Page>
      <GlobalStyle />
      <TitleBar>
        <QaGroup>
          {[
            Qa.box,
            <Caret key="1" />,
            <FolderIcon key="2" />,
            <LetterBox key="3">A</LetterBox>,
            <SaveIcon key="4" />,
            Qa.saveAs,
            Qa.undo,
            <Caret key="5" $c="#aaa" />,
            Qa.redo,
            <Caret key="6" $c="#aaa" />,
            Qa.regen,
            Qa.brush,
            Qa.monitor,
            Qa.windows,
            <Caret key="7" />,
            <CloseX key="8" s={11} c="#555" w={1.6} />,
          ].map((node, i) => (
            <QaSlot key={i} $w={QA_WIDTHS[i]}>
              {node}
            </QaSlot>
          ))}
          <QaSlot $w={22} $line>
            <Caret />
          </QaSlot>
        </QaGroup>
        <WindowTitle>00 (活动的) D:\CREO\testing\0106\00.asm - Creo Parametric 6.0</WindowTitle>
      </TitleBar>

      <TabBar>
        {["分析", "注释", "实时仿真", "人体模型", "工具", "模型", "框架", "MCADEx Tools", "CreoBox", "应用程序"].map((t) => (
          <Tab key={t} $active={t === "工具"}>
            {t}
          </Tab>
        ))}
      </TabBar>

      <Ribbon>
        <RibbonGroup $w={263}>
          <GroupBody>
            <Stack $w={73}>
              <SmallBtn><UserInfoIcon />元件</SmallBtn>
              <SmallBtn><UserInfoIcon />模型信息</SmallBtn>
              <SmallBtn><UserInfoIcon />特征信息</SmallBtn>
            </Stack>
            <VRule />
            <TallBtn $w={54}>
              <TallIcon><ChainIcon /></TallIcon>
              参考查看器
            </TallBtn>
            <TallBtn $w={44}>
              <TallIcon><Binoculars /></TallIcon>
              查找
            </TallBtn>
            <Stack $w={82} $pad={4}>
              <SmallBtn $off><IconCell $w={18}><GeomCheckIcon /></IconCell>几何检查</SmallBtn>
              <SmallBtn><IconCell $w={18}><MsgLogIcon /></IconCell>消息日志</SmallBtn>
              <SmallBtn><IconCell $w={18}><CompareIcon /></IconCell>比较装配</SmallBtn>
            </Stack>
          </GroupBody>
          <GroupLabel $w={130}>调查 <Caret /></GroupLabel>
        </RibbonGroup>

        <RibbonGroup $w={245}>
          <GroupBody>
            <TallBtn $w={62}>
              <TallIcon><PuzzleIcon /></TallIcon>
              元件界面
            </TallBtn>
            <TallBtn $w={56}>
              <TallIcon><PublishIcon /></TallIcon>
              发布几何
            </TallBtn>
            <TallBtn $w={46}>
              <TallIcon><FamilyTableIcon /></TallIcon>
              族表
            </TallBtn>
            <Stack $w={80}>
              <SmallBtn $gap={3}><GlyphIcon>( )</GlyphIcon>参数</SmallBtn>
              <SmallBtn $gap={5}><IconCell $w={18}><ToggleDimIcon /></IconCell>切换尺寸</SmallBtn>
              <SmallBtn $gap={3}><GlyphIcon><strong>d=</strong></GlyphIcon>关系</SmallBtn>
            </Stack>
          </GroupBody>
          <GroupLabel>模型意图 <Caret /></GroupLabel>
        </RibbonGroup>

        <RibbonGroup $w={204}>
          <GroupBody>
            <Stack $w={113} $pad={8}>
              <SmallBtn><IconCell $w={18}><UdfIcon /></IconCell>UDF 库</SmallBtn>
              <SmallBtn><IconCell $w={18}><AppearIcon /></IconCell>外观管理器</SmallBtn>
              <SmallBtn><IconCell $w={18}><AuxIcon /></IconCell>辅助应用程序</SmallBtn>
            </Stack>
            <Stack $w={90}>
              <SmallBtn><IconCell $w={18}><ImageEditIcon /></IconCell>图像编辑器</SmallBtn>
            </Stack>
          </GroupBody>
          <GroupLabel>实用工具</GroupLabel>
        </RibbonGroup>

        <RibbonGroup $w={173}>
          <GroupBody>
            <Stack $w={3} />
            <TallBtn $w={40} $on>
              <TallIcon><BoltTallIcon /></TallIcon>
              螺钉
              <TallCaret><Caret /></TallCaret>
            </TallBtn>
            <TallBtn $w={48}>
              <TallIcon><PinTallIcon /></TallIcon>
              定位销
              <TallCaret><Caret /></TallCaret>
            </TallBtn>
            <Stack $w={80} $pad={3}>
              <SmallBtn $gap={1}><ReassembleIcon />重新组装</SmallBtn>
              <SmallBtn $gap={1}><RedefineIcon />重定义</SmallBtn>
              <SmallBtn $gap={1}><CloseX s={18} />删除</SmallBtn>
            </Stack>
          </GroupBody>
          <GroupLabel>Intelligent Fastener <Caret /></GroupLabel>
        </RibbonGroup>

        <RibbonGroup $w={76}>
          <GroupBody>
            <Stack $w={76} $pad={8}>
              <SmallBtn $gap={5}><GreenBall />工具<Caret /></SmallBtn>
            </Stack>
          </GroupBody>
          <GroupLabel>TOOLKIT</GroupLabel>
        </RibbonGroup>
      </Ribbon>

      <Main>
        <SidePanel>
          <PanelTabs>
            <CutText>文件夹浏览器</CutText>
            <FavTab><FavIcon />收藏夹</FavTab>
          </PanelTabs>
          <PanelTools>
            <ToolsIcon />
            <ToolCaret $mx={11}><Caret /></ToolCaret>
            <ListDocIcon />
            <ToolCaret $mx={11}><Caret /></ToolCaret>
            <TreeEyeIcon />
          </PanelTools>
          <SearchRow>
            <SearchBox>×</SearchBox>
            <SearchAction $ml={7}>
              <Caret />
            </SearchAction>
            <SearchAction $ml={12}>+</SearchAction>
          </SearchRow>
          <TableGrid>
            <HeadRow>
              <HeadCell />
              <HeadCell>CNAME</HeadCell>
              <HeadCell><HeadClip>PTC_MATERIAL</HeadClip></HeadCell>
              <HeadCell>表面处理</HeadCell>
            </HeadRow>
            {ROWS.map((r, i) => (
              <Row key={i}>
                <Cell $pad={0} $muted={r.muted} $shift={r.shift}><span>{r.name}</span></Cell>
                <Cell $pad={0} $u={r.under}><span>{r.cname}</span></Cell>
                <Cell $u={r.under}><span>{r.mat}</span></Cell>
                <Cell $u={r.under}><span>{r.surf}</span></Cell>
              </Row>
            ))}
            <DropLine />
            <FillRow>
              <FillCell />
              <FillCell />
              <FillCell />
              <FillCell />
            </FillRow>
          </TableGrid>
          <ScrollRow>
            <ScrollPart $w={40} />
            <ScrollPart $w={13}>▶</ScrollPart>
            <ScrollPart $w={16}>◀</ScrollPart>
            <ScrollPart $w={121} $light />
            <ScrollPart $w={50} />
            <ScrollPart $w={17}>▶</ScrollPart>
          </ScrollRow>
        </SidePanel>

        <Canvas>
          <Model />
          <FloatBar>
            {FloatIcons.map((icon, i) => (
              <FloatBtn key={i} $on={i === FloatIcons.length - 1}>
                {icon}
              </FloatBtn>
            ))}
          </FloatBar>

          <Dialog>
            <DialogTitle>螺钉紧固件定义</DialogTitle>
            <DialogBody>
              <LeftCol>
                <FormRow $h={26}>
                  <FormLabel>目录</FormLabel>
                  <span />
                  <FieldIcons>
                    <Combo $w={156}>
                      <ComboText>mm</ComboText>
                      <ComboArrowCell />
                    </Combo>
                    <IconCell $w={26} $ml={45}><CursorIcon /></IconCell>
                    <IconCell $w={26}><FolderIcon s={18} /></IconCell>
                    <IconCell $w={24}><SaveIcon s={16} /></IconCell>
                  </FieldIcons>
                </FormRow>
                <Rule $mt={11} />
                <FormRow $mt={10} $h={41}>
                  <FormLabel>
                    螺钉
                    <SubLabel>P: 0.700</SubLabel>
                  </FormLabel>
                  <span />
                  <Combo>
                    <ComboText $pad={14} $gap={10}>
                      <ScrewHeadIcon />
                      ISO 4762 - 12.9
                    </ComboText>
                    <ComboArrowCell />
                  </Combo>
                </FormRow>
                <FormRow $mt={12} $h={26}>
                  <FormLabel>螺纹</FormLabel>
                  <span />
                  <FieldIcons>
                    <Combo $w={75}>
                      <ComboText>M4</ComboText>
                      <ComboArrowCell />
                    </Combo>
                    <SquareBtn $ml={7}><SquareDrill /></SquareBtn>
                    <TimesText>x</TimesText>
                    <Combo $w={74}>
                      <ComboText $pad={8}>12.000</ComboText>
                      <ComboArrowCell />
                    </Combo>
                    <SquareBtn $ml={7}><LengthScrew /></SquareBtn>
                    <SquareBtn $ml={6}><HolePlusIcon /></SquareBtn>
                  </FieldIcons>
                </FormRow>
                <FormRow $mt={13} $h={61}>
                  <FormLabel $pb={12}>
                    侧面 1
                    <br />
                    垫圈
                  </FormLabel>
                  <CheckStack>
                    <Check />
                    <Check />
                  </CheckStack>
                  <WasherStack>
                    <WasherCombo />
                    <WasherCombo />
                  </WasherStack>
                </FormRow>
                <Rule $mt={11} />
                <FormRow $mt={11} $h={40}>
                  <FormLabel>嵌件</FormLabel>
                  <CheckCol><Check /></CheckCol>
                  <Combo $off>
                    <ComboText $gap={4}>
                      <CoilIcon />+ HELICOIL® free running (1.0 x d)
                    </ComboText>
                    <ComboArrowCell />
                  </Combo>
                </FormRow>
                <Section>
                  <Collapse />
                  <SectionText>2D - 预览</SectionText>
                  <SectionLine />
                </Section>
                <PreviewDrawing />
              </LeftCol>

              <RightCol>
                <HoleHead>
                  <Collapse />
                  <HoleTitle>孔</HoleTitle>
                </HoleHead>
                <IsoLine $ml={21}>ISO</IsoLine>
                <RightBody>
                  <Flow $mt={9} $h={24}>
                    <Combo $w={200}><ComboText>中等配合 - 4.5</ComboText></Combo>
                  </Flow>
                  <Flow $mt={12} $h={24}><DiaIcon /><InputBox>4.500</InputBox></Flow>
                  <SideRule $mt={12} />
                  <Flow $mt={8} $h={16} $ml={1}>
                    <Check><TickMark /></Check>
                    <BoldText $ml={6}>侧面 1 - 沉头孔</BoldText>
                  </Flow>
                  <IsoLine $ml={22} $mt={8}>ISO</IsoLine>
                  <Flow $mt={8} $h={26}>
                    <Combo $w={200}><ComboText>DIN974-1 R1</ComboText></Combo>
                  </Flow>
                  <Flow $mt={10} $h={25}><DiaIcon /><InputBox>8.000</InputBox></Flow>
                  <Flow $mt={13} $h={16} $ml={1}>
                    <Check />
                    <BoldText $ml={6}>侧面 1 - 自动</BoldText>
                  </Flow>
                  <Flow $mt={8} $h={25} $gap={10} $ml={6}>
                    <PlainText>偏移</PlainText>
                    <InputBox $off>0.00</InputBox>
                  </Flow>
                  <SideRule $mt={11} />
                  <Flow $mt={11} $h={16}><BoldText>侧面 2 - 螺纹</BoldText></Flow>
                  <IsoLine $mt={8}>ISO</IsoLine>
                  <Flow $mt={9} $h={16} $gap={8} $ml={1}><Check /><PlainText>全螺纹</PlainText></Flow>
                  <Flow $mt={17} $h={16} $gap={8} $ml={1}><Check /><PlainText>通孔</PlainText></Flow>
                  <Flow $mt={17} $h={16} $gap={8} $ml={1}><Check><TickMark /></Check><PlainText>带螺纹</PlainText></Flow>
                  <Flow $mt={23} $h={16} $ml={10}><PlainText>螺纹深度</PlainText></Flow>
                  <Flow $mt={21} $h={16} $ml={10}><PlainText>钻孔深度</PlainText></Flow>
                  <Flow $mt={20} $h={16} $ml={10}><PlainText>钻孔直径</PlainText></Flow>
                </RightBody>
              </RightCol>
            </DialogBody>
            <Footer>
              <FootBtn>预览</FootBtn>
              <OkBtn />
            </Footer>
            <ClickMark />
          </Dialog>
        </Canvas>
      </Main>

      <StatusBar>
        <StatusCell $w={63} $line $start>
          <Svg width={18} height={18} viewBox="0 0 18 18">
            <path d="M2 9h8v8H2z" fill="#fff" stroke="#a5a5a5" />
            <path d="M6 9l6-6m0 0l-3 0m3 0v3" stroke="#1f7d6a" strokeWidth="1.6" fill="none" />
            <path d="M12 8h5M15 6v5" stroke="#333" strokeWidth="1.4" />
          </Svg>
        </StatusCell>
        <StatusCell $w={44} $box $line>
          <Binoculars s={14} />
          <Caret />
        </StatusCell>
        <StatusCell $w={40} $box $ml={6}>
          <Svg width={18} height={18} viewBox="0 0 18 18">
            <path d="M1 4h13v13H1z" fill="#eef0d8" stroke="#666" />
            <path d="M1 4l3-3h13l-3 3zM14 4l3-3v13l-3 3z" fill="#e4e4e4" stroke="#666" />
            <rect x="4" y="7" width="7" height="7" fill="#7fb7d6" />
          </Svg>
        </StatusCell>
        <GeomBox>几何</GeomBox>
      </StatusBar>
    </Page>
  );
}
